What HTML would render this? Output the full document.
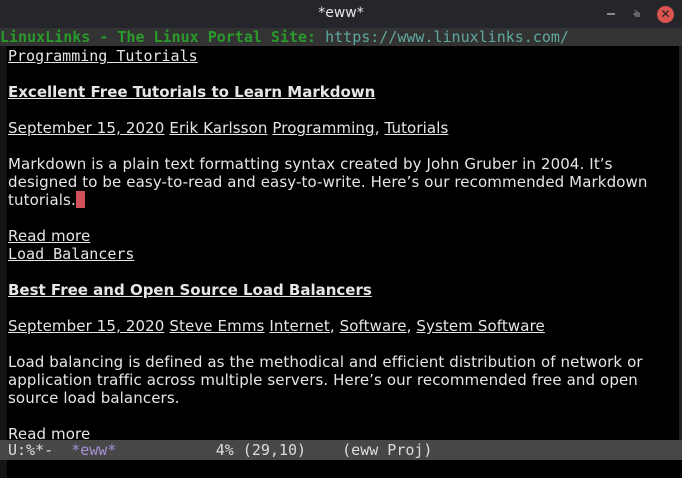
<!DOCTYPE html>
<html><head><meta charset="utf-8"><style>
body{margin:0;width:682px;height:478px;background:#000;overflow:hidden;position:relative;font-family:"DejaVu Sans","Liberation Sans",sans-serif}
.title{position:absolute;left:0;top:0;width:682px;height:28px;background:#24262b;color:#e6e6e6;font-size:14px;text-align:center;line-height:26px}
.hdr{position:absolute;left:0;top:28px;width:682px;height:18px;background:#333;font-family:"DejaVu Sans Mono",monospace;font-size:15px;line-height:18px;white-space:pre;color:#2a9a2a;font-weight:bold}
.hdr span{color:#5fa8a0;font-weight:normal}
.fr{position:absolute;left:0;top:46px;width:7px;height:394px;background:#151515}
.fr2{position:absolute;right:0;top:46px;width:3px;height:394px;background:#222}
.c{position:absolute;left:8px;top:47px;color:#e6e6e6;font-size:15px;line-height:18px;white-space:pre;letter-spacing:0.11px}
.c b{letter-spacing:0}
.m{font-family:"DejaVu Sans Mono",monospace;letter-spacing:0}
u{text-decoration:underline}
.cur{display:inline-block;width:9px;height:17px;background:#d4505a;vertical-align:-3px}
.ml{position:absolute;left:0;top:440px;width:682px;height:20px;background:#474747;color:#ddd;font-family:"DejaVu Sans Mono",monospace;font-size:15px;line-height:20px;white-space:pre;padding-left:8px}
.ml span{color:#a78fd6}
.bot{position:absolute;left:0;top:460px;width:7px;height:18px;background:#151515}
</style></head><body>
<div class="title">*eww*</div>
<div style="position:absolute;left:607px;top:13px;width:8px;height:2px;background:#888"></div>
<div style="position:absolute;left:633px;top:10px;width:7px;height:7px;background:#666;clip-path:polygon(0 0,60% 0,0 60%,40% 100%,100% 100%,100% 40%)"></div>
<div style="position:absolute;left:657px;top:6px;width:17px;height:17px;border-radius:50%;background:#d9534f;color:#222;font-size:12px;line-height:17px;text-align:center;font-weight:bold">✕</div>
<div class="hdr">LinuxLinks - The Linux Portal Site:<span> https://www.linuxlinks.com/</span></div>
<div class="fr"></div><div class="fr2"></div>
<div class="c"><u class="m">Programming Tutorials</u>

<u><b>Excellent Free Tutorials to Learn Markdown</b></u>

<u>September 15, 2020</u> <u>Erik Karlsson</u> <u>Programming</u>, <u>Tutorials</u>

Markdown is a plain text formatting syntax created by John Gruber in 2004. It’s
designed to be easy-to-read and easy-to-write. Here’s our recommended Markdown
tutorials.<span class="cur"></span>

<u>Read more</u>
<u class="m">Load Balancers</u>

<u><b>Best Free and Open Source Load Balancers</b></u>

<u>September 15, 2020</u> <u>Steve Emms</u> <u>Internet</u>, <u>Software</u>, <u>System Software</u>

Load balancing is defined as the methodical and efficient distribution of network or
application traffic across multiple servers. Here’s our recommended free and open
source load balancers.

<u>Read more</u></div>
<div class="ml">U:%*-  <span>*eww*</span>           4% (29,10)    (eww Proj)</div>
<div class="bot"></div>
</body></html>
